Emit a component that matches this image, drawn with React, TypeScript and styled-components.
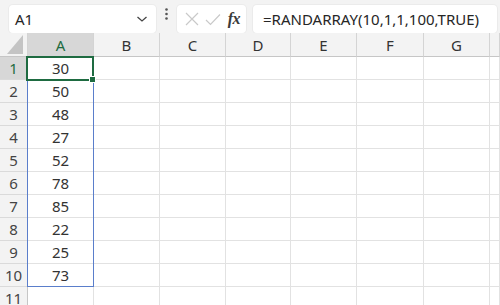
import React from 'react';
import styled, { createGlobalStyle } from 'styled-components';

const GlobalStyle = createGlobalStyle`
  html, body {
    margin: 0;
    padding: 0;
    background: #f3f3f3;
    font-family: "Noto Sans", "Open Sans", "Liberation Sans", sans-serif;
    overflow: hidden;
  }
`;

const COLUMNS = ['A', 'B', 'C', 'D', 'E', 'F', 'G'];
const VALUES = [30, 50, 48, 27, 52, 78, 85, 22, 25, 73];
const ROW_COUNT = 11;

const Page = styled.div`
  width: 500px;
  height: 305px;
  overflow: hidden;
  display: flex;
  flex-direction: column;
`;

const FormulaBar = styled.div`
  height: 40px;
  display: flex;
  align-items: flex-start;
  padding: 5px 0 0 9px;
  box-sizing: border-box;
`;

const Box = styled.div<{ $width?: number }>`
  height: 28px;
  background: #ffffff;
  border-radius: 4px;
  box-shadow: 0 0 0 1px #ebebeb;
  display: flex;
  align-items: center;
  box-sizing: border-box;
  ${(p) => (p.$width ? `width: ${p.$width}px;` : 'flex: 1;')}
`;

const NameBox = styled(Box)`
  padding: 0 8px 0 6px;
  justify-content: space-between;
  font-size: 15px;
  color: #262626;
`;

const Dots = styled.div`
  width: 21px;
  display: flex;
  justify-content: center;
  padding-top: 3px;
`;

const FxBox = styled(Box)`
  padding: 0 6px 0 8px;
  justify-content: space-between;
  margin-right: 7px;
`;

const FxLabel = styled.span`
  font-family: "Liberation Serif", "DejaVu Serif", serif;
  font-style: italic;
  font-weight: bold;
  font-size: 16px;
  color: #3a3a3a;
  letter-spacing: -0.5px;
`;

const FormulaInput = styled(Box)`
  padding-left: 10px;
  margin-right: 3px;
  font-size: 15px;
  color: #262626;
  white-space: nowrap;
`;

const Sheet = styled.div`
  position: relative;
  display: grid;
  grid-template-columns: 28px 66px 66px 66px 65px 66px 67px 66px 1fr;
  grid-template-rows: 24px;
  grid-auto-rows: 23px;
`;

const Corner = styled.div`
  background: #f3f3f3;
  border-right: 1px solid #d4d4d4;
  border-bottom: 1px solid #c6c6c6;
  position: relative;
  box-sizing: border-box;
`;

const CornerTriangle = styled.div`
  position: absolute;
  right: 4px;
  bottom: 2px;
  width: 0;
  height: 0;
  border-left: 16px solid transparent;
  border-bottom: 19px solid #c4c4c4;
`;

const HeaderCell = styled.div<{ $selected?: boolean }>`
  background: ${(p) => (p.$selected ? '#d7d7d7' : '#f3f3f3')};
  color: ${(p) => (p.$selected ? '#1e6b41' : '#333333')};
  border-right: 1px solid #d4d4d4;
  border-bottom: 1px solid ${(p) => (p.$selected ? '#1e6b41' : '#c6c6c6')};
  box-sizing: border-box;
  display: flex;
  align-items: center;
  justify-content: center;
  font-size: 15px;
`;

const RowHeader = styled.div<{ $selected?: boolean }>`
  background: ${(p) => (p.$selected ? '#d7d7d7' : '#f3f3f3')};
  color: ${(p) => (p.$selected ? '#1e6b41' : '#444444')};
  border-right: 1px solid ${(p) => (p.$selected ? '#1e6b41' : '#c6c6c6')};
  border-bottom: 1px solid #dadada;
  box-sizing: border-box;
  display: flex;
  align-items: center;
  justify-content: center;
  font-size: 15px;
`;

const Cell = styled.div`
  background: #ffffff;
  border-right: 1px solid #e2e2e2;
  border-bottom: 1px solid #e2e2e2;
  box-sizing: border-box;
  display: flex;
  align-items: center;
  justify-content: center;
  font-size: 15px;
  color: #333333;
`;

const SpillBorder = styled.div`
  position: absolute;
  left: 27px;
  top: 23px;
  width: 67px;
  height: 231px;
  border: 1px solid #5a7ecb;
  box-sizing: border-box;
  pointer-events: none;
`;

const Selection = styled.div`
  position: absolute;
  left: 26px;
  top: 23px;
  width: 68px;
  height: 25px;
  border: 2px solid #1e6b41;
  box-sizing: border-box;
  pointer-events: none;
`;

const FillHandle = styled.div`
  position: absolute;
  right: -4px;
  bottom: -4px;
  width: 5px;
  height: 5px;
  background: #1e6b41;
  border: 1px solid #ffffff;
`;

const App: React.FC = () => {
  return (
    <Page>
      <GlobalStyle />
      <FormulaBar>
        <NameBox $width={147}>
          <span>A1</span>
          <svg width="12" height="8" viewBox="0 0 12 8">
            <path d="M1.5 2 L6 6 L10.5 2" fill="none" stroke="#444" strokeWidth="1.3" />
          </svg>
        </NameBox>
        <Dots>
          <svg width="3" height="12" viewBox="0 0 3 12">
            <circle cx="1.5" cy="1.5" r="1.3" fill="#555" />
            <circle cx="1.5" cy="6" r="1.3" fill="#555" />
            <circle cx="1.5" cy="10.5" r="1.3" fill="#555" />
          </svg>
        </Dots>
        <FxBox $width={69}>
          <svg width="14" height="14" viewBox="0 0 14 14">
            <path d="M1 1 L13 13 M13 1 L1 13" stroke="#c9c9c9" strokeWidth="1.2" />
          </svg>
          <svg width="16" height="13" viewBox="0 0 16 13">
            <path d="M1 7 L5.5 11.5 L15 1.5" fill="none" stroke="#c9c9c9" strokeWidth="1.2" />
          </svg>
          <FxLabel>fx</FxLabel>
        </FxBox>
        <FormulaInput>=RANDARRAY(10,1,1,100,TRUE)</FormulaInput>
      </FormulaBar>
      <Sheet>
        <Corner>
          <CornerTriangle />
        </Corner>
        {COLUMNS.map((c) => (
          <HeaderCell key={c} $selected={c === 'A'}>
            {c}
          </HeaderCell>
        ))}
        <HeaderCell />
        {Array.from({ length: ROW_COUNT }, (_, r) => (
          <React.Fragment key={r}>
            <RowHeader $selected={r === 0}>{r + 1}</RowHeader>
            {COLUMNS.map((c, ci) => (
              <Cell key={c}>{ci === 0 && VALUES[r] !== undefined ? VALUES[r] : ''}</Cell>
            ))}
            <Cell />
          </React.Fragment>
        ))}
        <SpillBorder />
        <Selection>
          <FillHandle />
        </Selection>
      </Sheet>
    </Page>
  );
};

export default App;
